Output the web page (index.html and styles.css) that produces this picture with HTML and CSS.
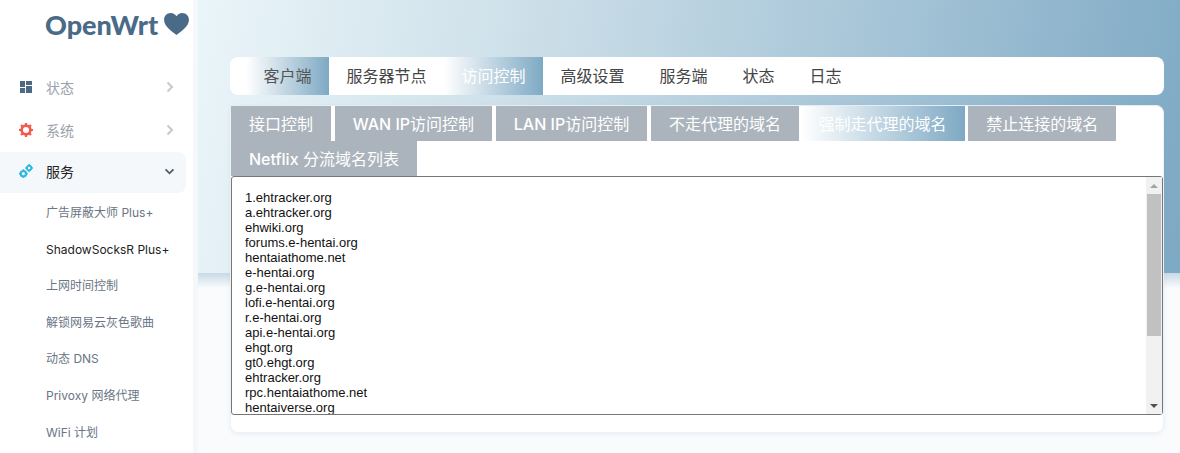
FILE: index.html
```html
<!DOCTYPE html>
<html lang="zh-CN">
<head>
	<meta charset="UTF-8">
	<title>ShadowSocksR Plus+ - OpenWrt</title>
	<link rel="stylesheet" href="styles.css">
</head>
<body>
<div class="page">
	<aside class="sidebar">
		<div class="logo">
			<span class="logo-text">OpenWrt</span>
			<svg class="logo-heart" viewBox="0 0 26 23"><path d="M13 23C8 19 0 14 0 7 0 3 3 0 7 0 9.600 0 11.800 1.300 13 3.500 14.200 1.300 16.400 0 19 0 23 0 26 3 26 7 26 14 18 19 13 23Z"/></svg>
		</div>
		<ul class="menu">
			<li class="menu-item">
				<svg class="menu-icon" viewBox="-1 -1 14 14"><path fill="#4d6a82" d="M0 0h5v6H0zM0 7h5v5H0zM6 0h6v4H6zM6 5h6v7H6z"/></svg>
				<span class="menu-label">状态</span>
				<svg class="arrow" viewBox="0 0 8 12"><path d="M1.500 1.500 6 6l-4.500 4.500"/></svg>
			</li>
			<li class="menu-item">
				<svg class="menu-icon" viewBox="0 0 16 16"><circle cx="8" cy="8" r="5" fill="none" stroke="#f4594c" stroke-width="3"/><path stroke="#f4594c" stroke-width="2.500" d="M8 0v3M8 13v3M0 8h3M13 8h3M2.300 2.300l2 2M11.700 11.700l2 2M13.700 2.300l-2 2M4.300 11.700l-2 2"/></svg>
				<span class="menu-label">系统</span>
				<svg class="arrow" viewBox="0 0 8 12"><path d="M1.500 1.500 6 6l-4.500 4.500"/></svg>
			</li>
			<li class="menu-item open">
				<svg class="menu-icon" viewBox="0 0 16 16" fill="none" stroke="#2fb9dd"><circle cx="5" cy="11" r="3" stroke-width="2.500"/><circle cx="11.500" cy="4.500" r="2.500" stroke-width="2.200"/><path stroke-width="1.800" d="M5 6v2M5 14v2M0 11h2M8 11h2M11.500 0v2M11.500 7v2M7 4.500h2M14 4.500h2"/></svg>
				<span class="menu-label">服务</span>
				<svg class="arrow down" viewBox="0 0 12 8"><path d="M1.500 1.500 6 6l4.500-4.500"/></svg>
			</li>
		</ul>
		<ul class="submenu">
			<li>广告屏蔽大师 Plus+</li>
			<li class="current">ShadowSocksR Plus+</li>
			<li>上网时间控制</li>
			<li>解锁网易云灰色歌曲</li>
			<li>动态 DNS</li>
			<li>Privoxy 网络代理</li>
			<li>WiFi 计划</li>
		</ul>
	</aside>
	<main class="main">
		<div class="banner"></div>
		<div class="content">
			<ul class="tabs">
				<li class="grad">客户端</li>
				<li>服务器节点</li>
				<li class="grad light">访问控制</li>
				<li>高级设置</li>
				<li>服务端</li>
				<li>状态</li>
				<li>日志</li>
			</ul>
			<div class="panel">
				<ul class="subtabs">
					<li>接口控制</li>
					<li><b>WAN IP</b>访问控制</li>
					<li><b>LAN IP</b>访问控制</li>
					<li>不走代理的域名</li>
					<li class="active">强制走代理的域名</li>
					<li>禁止连接的域名</li>
					<li><b>Netflix</b> 分流域名列表</li>
				</ul>
				<div class="domains-box">
					<textarea class="domains" readonly spellcheck="false">1.ehtracker.org
a.ehtracker.org
ehwiki.org
forums.e-hentai.org
hentaiathome.net
e-hentai.org
g.e-hentai.org
lofi.e-hentai.org
r.e-hentai.org
api.e-hentai.org
ehgt.org
gt0.ehgt.org
ehtracker.org
rpc.hentaiathome.net
hentaiverse.org
</textarea>
					<div class="scrollbar">
						<div class="sb-btn"><span class="sb-up"></span></div>
						<div class="sb-track"><div class="sb-thumb"></div></div>
						<div class="sb-btn"><span class="sb-down"></span></div>
					</div>
				</div>
			</div>
		</div>
	</main>
</div>
</body>
</html>
```

FILE: styles.css
```css
*{
	box-sizing: border-box;
}
html,body{
	margin: 0;
	height: 100%;
	overflow: hidden;
}
body{
	font-family: "Inter", "Noto Sans CJK SC", sans-serif;
	background: #f9fbfd;
}
ul{
	list-style: none;
	margin: 0;
	padding: 0;
}
.page{
	display: flex;
	height: 453px;
}

/* left menu */
.sidebar{
	width: 193px;
	flex: none;
	background: #fff;
	overflow: hidden;
}
.logo{
	display: flex;
	align-items: center;
	height: 50px;
	padding: 0 0 0 45px;
}
.logo-text{
	font-family: "Lato", sans-serif;
	font-weight: 900;
	font-size: 27px;
	line-height: 50px;
	color: #4a6b88;
}
.logo-heart{
	width: 25px;
	height: 22px;
	margin-left: 6px;
	margin-top: -3px;
	fill: #4a6b88;
	flex: none;
}
.menu{
	margin-top: 17px;
}
.menu-item{
	display: flex;
	align-items: center;
	width: 186px;
	height: 41px;
	padding: 0 11px 2px 19px;
	font-size: 14px;
	color: #9aa2ab;
	border-radius: 0 8px 8px 0;
}
.menu-item:first-child{
	margin-bottom: 2.500px;
}
.menu-item.open{
	color: #222;
	background: #f5f8fb;
}
.menu-icon{
	width: 14px;
	height: 14px;
	margin-right: 13px;
	flex: none;
}
.menu-label{
	flex: 1;
}
.arrow{
	width: 8px;
	height: 12px;
	fill: none;
	stroke: #c5c9ce;
	stroke-width: 2;
	margin-right: 1px;
}
.arrow.down{
	width: 11px;
	height: 7px;
	stroke: #4f5b66;
	margin-right: 0;
}
.submenu{
	padding-top: 2.500px;
}
.submenu li{
	height: 36.600px;
	line-height: 36px;
	padding-left: 46px;
	font-size: 12px;
	color: #6a7583;
	white-space: nowrap;
}
.submenu li.current{
	color: #222;
}

/* main area */
.main{
	flex: 1;
	position: relative;
	padding: 57px 16px 0 32px;
	border-left: 5px solid #f4f8fb;
}
.banner{
	position: absolute;
	left: 0;
	right: 0;
	top: 0;
	height: 273px;
	background: linear-gradient(100deg, #eaf5f9 0%, #cfe1ea 30%, #a8c6d8 65%, #7ea9c4 100%);
}
.banner::after{
	content: "";
	position: absolute;
	left: 0;
	right: 0;
	top: 273px;
	height: 15px;
	background: linear-gradient(#c8d9e5, #f9fbfd);
}
.content{
	position: relative;
}
.tabs{
	display: flex;
	height: 38px;
	padding-left: 16px;
	background: #fff;
	border-radius: 8px;
	overflow: hidden;
}
.tabs li{
	padding: 0 17.500px;
	font-size: 16px;
	line-height: 39px;
	color: #444;
}
.tabs li.grad{
	background: linear-gradient(90deg, #fff, #7ea9c4);
	color: #555;
}
.tabs li.grad.light{
	color: #fff;
}
.panel{
	margin-top: 10px;
	height: 328px;
	background: #fff;
	border: 1px solid #eef2f5;
	border-top: 1px solid #e4edf2;
	border-radius: 8px;
	box-shadow: 0 1px 4px rgba(120,150,170,.12);
}
.subtabs{
	display: flex;
	flex-wrap: wrap;
	gap: 0 3.700px;
}
.subtabs li{
	height: 35px;
	line-height: 37px;
	padding: 0 18px;
	font-size: 16px;
	color: #fff;
	background: #abb4bc;
}
.subtabs li b{
	font-weight: 500;
}
.subtabs li.active{
	margin-left: -2px;
	background: linear-gradient(90deg, #fff, #7ea9c4);
}
.domains-box{
	position: relative;
	width: 932px;
	height: 239px;
}
.domains{
	display: block;
	width: 100%;
	height: 100%;
	padding: 13px 13px 0;
	border: 1px solid #767676;
	border-radius: 3px;
	font-family: "Liberation Sans", sans-serif;
	font-size: 13px;
	line-height: 15px;
	color: #111;
	background: #fff;
	outline: none;
	resize: none;
	overflow: hidden;
}

/* scrollbar lies over the textarea */
.scrollbar{
	position: absolute;
	top: 1px;
	right: 1px;
	bottom: 1px;
	width: 16px;
	display: flex;
	flex-direction: column;
	background: #f1f1f1;
}
.sb-btn{
	height: 17px;
	display: flex;
	align-items: center;
	justify-content: center;
	flex: none;
}
.sb-up{
	border: 4px solid transparent;
	border-top: 0;
	border-bottom: 4px solid #a3a3a3;
}
.sb-down{
	border: 4px solid transparent;
	border-bottom: 0;
	border-top: 4px solid #505050;
}
.sb-track{
	flex: 1;
	padding: 0 1px;
}
.sb-thumb{
	height: 142px;
	background: #c1c1c1;
}
```
